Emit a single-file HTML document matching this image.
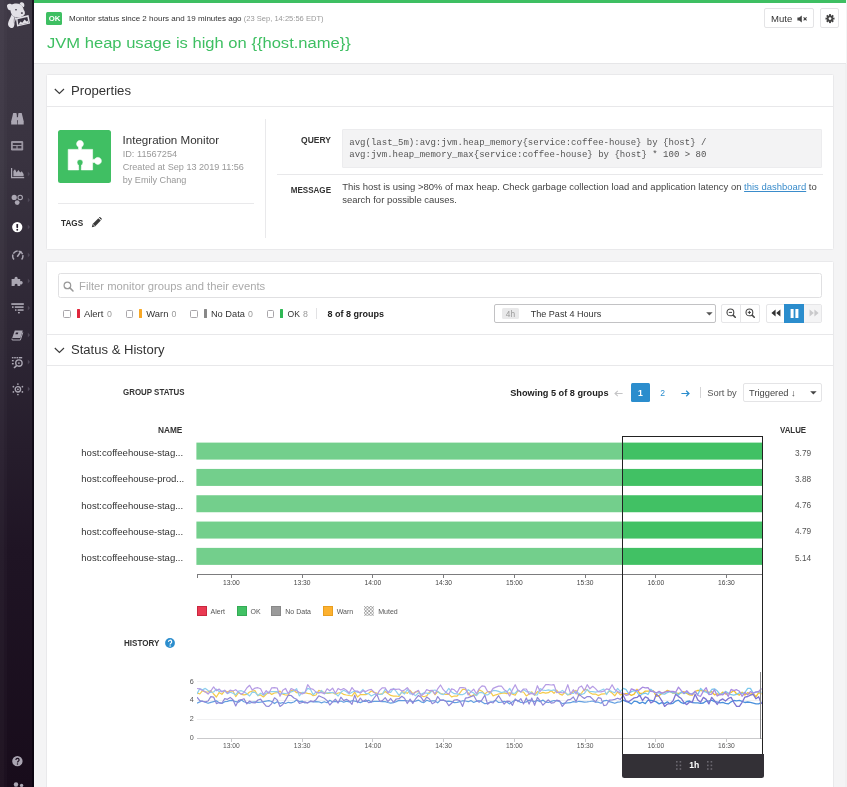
<!DOCTYPE html>
<html lang="en">
<head>
<meta charset="utf-8">
<title>JVM heap usage is high on {{host.name}}</title>
<style>
*{box-sizing:border-box;margin:0;padding:0}
html,body{width:847px;height:787px;overflow:hidden}
body{font-family:"Liberation Sans",sans-serif;color:#333;background:#f4f4f5;position:relative;font-size:10px}
.a{position:absolute;display:block}
.t{position:absolute;white-space:nowrap}
#app{position:absolute;left:0;top:0;width:847px;height:787px;will-change:transform}
.g{color:#999}
a{color:#3a8ccb}
</style>
</head>
<body>
<div id="app">
<div class="a" style="left:0px;top:0px;width:34px;height:787px;background:linear-gradient(180deg,#3e3845 0%,#393340 20%,#2c2533 45%,#1f1424 70%,#180c1b 100%)"></div>
<div class="a" style="left:0px;top:0px;width:4px;height:787px;background:rgba(255,255,255,0.04)"></div>
<div class="a" style="left:4px;top:0px;width:3px;height:787px;background:rgba(255,255,255,0.02)"></div>
<div class="a" style="left:32.4px;top:0px;width:1.6px;height:787px;background:rgba(4,0,10,0.6)"></div>
<svg class="a" style="left:0px;top:0px;" width="34" height="32" viewBox="0 0 34 32"><g fill="#e2e0e6"><path d="M7 6.2 C6.6 4.4 8.6 3.4 10.4 3.8 C12 4.2 12.6 5.6 12.4 7.4 C12.2 9.4 11 10.6 9.6 10.2 C8 9.8 7.3 8 7 6.2 Z"/><path d="M10.6 5.2 C13 3.4 17.6 3 20.4 4.4 C22.4 5.6 23.4 8 23.8 10 C24.6 11 25.2 12.6 24.8 14 C24.2 16 21.6 17.2 18.6 17.4 C15.6 17.6 12.8 16.6 11.6 14.2 C10.4 11.8 9.8 7.6 10.6 5.2 Z"/><path d="M19.6 3.4 C20.4 2 22.6 1.8 23.6 3 C24.6 4.2 24.6 6.2 23.8 7.2 C22.6 6.6 20.6 5 19.6 3.4 Z"/><path d="M11.6 14.6 C10.6 17.6 8.6 20.6 8.1 23.2 C7.7 25.6 9.4 27.8 11.8 28 C13.4 28.1 14.2 26.6 14.4 24.6 C14.6 22 15.6 19.8 16.6 17.8 C15 17.4 13 16.4 11.6 14.6 Z"/><path d="M15.9 17.9 L28.5 15 L30.1 23.6 L17.1 26.6 Z"/></g><path d="M17.5 19.2 L27.4 16.9 L28.5 22.7 L18.3 25.1 Z" fill="#3a3543"/><path d="M18.2 24.9 L20.6 21.4 L22.2 22.8 L24.6 19.4 L26.6 21.6 L27.6 20.4 L28.4 22.7 Z" fill="#e2e0e6"/><ellipse cx="16" cy="9.7" rx="0.9" ry="0.75" fill="#3a3543"/><ellipse cx="21.9" cy="13.1" rx="1.1" ry="0.8" fill="#3a3543"/><path d="M14.8 17 C14.2 19.2 14 21.4 14.4 23.6" stroke="#3a3543" stroke-width="0.5" fill="none"/></svg>
<svg class="a" style="left:10px;top:112px;" width="15" height="14" viewBox="0 0 15 14"><g fill="#aba7b3"><path d="M3.2 1 h3.2 l0.4 2 l0.4 9.6 h-6 v-3.4 z"/><path d="M8.5 1 h3.2 l2 8.2 v3.4 h-6 l0.4-9.6 z"/><rect x="6.2" y="5.2" width="2.6" height="3"/></g></svg>
<svg class="a" style="left:10px;top:140px;" width="15" height="12" viewBox="0 0 15 12"><rect x="1" y="0.9" width="12.2" height="9.5" rx="1.2" fill="#aba7b3" opacity="0.85"/><rect x="2.8" y="3" width="8.6" height="2" fill="#3a3441"/><rect x="2.8" y="6" width="3.6" height="2.4" fill="#3a3441"/><rect x="7.6" y="6" width="3.8" height="2.4" fill="#3a3441"/></svg>
<svg class="a" style="left:10px;top:167px;" width="16" height="12" viewBox="0 0 16 12"><path d="M1.6 1 v9.6 h12.6" fill="none" stroke="#aba7b3" stroke-width="1.2"/><path d="M3.4 9.2 V4 L5 2.2 L6.6 5.4 L8.4 3 L10.2 5.6 L11.8 4.2 L13.6 7 V9.2 Z" fill="#aba7b3"/></svg>
<svg class="a" style="left:11px;top:194px;" width="13" height="12" viewBox="0 0 13 12"><circle cx="3.2" cy="3.4" r="2.6" fill="#aba7b3"/><circle cx="9.2" cy="3.4" r="2.2" fill="none" stroke="#aba7b3" stroke-width="1.1"/><circle cx="6.2" cy="8.6" r="2.4" fill="#aba7b3"/></svg>
<svg class="a" style="left:11px;top:221px;" width="13" height="13" viewBox="0 0 13 13"><circle cx="6.25" cy="6.1" r="5.15" fill="#fff"/><rect x="5.4" y="3" width="1.7" height="3.9" rx="0.6" fill="#231a29"/><circle cx="6.25" cy="8.7" r="0.95" fill="#231a29"/></svg>
<svg class="a" style="left:11px;top:248px;" width="14" height="13" viewBox="0 0 14 13"><path d="M3 11.6 A5.1 5.1 0 1 1 10.6 11.6" fill="none" stroke="#aba7b3" stroke-width="1.5" stroke-dasharray="5.2 0.9"/><path d="M6.6 8.2 L9.8 3.6" stroke="#aba7b3" stroke-width="1.6" stroke-linecap="round"/></svg>
<svg class="a" style="left:11px;top:275px;" width="13" height="12" viewBox="0 0 13 12"><path d="M0.6 4 h3 a1.6 1.6 0 1 1 3 0 h2.6 v2.2 a1.7 1.7 0 1 1 0 3 v1.8 h-2.8 a1.5 1.5 0 1 0 -2.6 0 h-3.2 z" fill="#aba7b3"/></svg>
<svg class="a" style="left:11px;top:302px;" width="14" height="12" viewBox="0 0 14 12"><g fill="#aba7b3"><rect x="0.3" y="1.2" width="12.5" height="1.7"/><rect x="1" y="4.3" width="1.6" height="1.6"/><rect x="3.8" y="4.3" width="8.8" height="1.6"/><rect x="4" y="7.3" width="1.5" height="1.5"/><rect x="6.6" y="7.3" width="6" height="1.5"/><rect x="7" y="10" width="1.8" height="1.4"/></g></svg>
<svg class="a" style="left:11px;top:330px;" width="13" height="11" viewBox="0 0 13 11"><path d="M3.8 0.5 h8 l-2.4 7.6 h-8.2 z" fill="#aba7b3"/><path d="M1 8.6 l0.2 1.4 h8.2 l2.4-7.6" fill="none" stroke="#aba7b3" stroke-width="1"/><rect x="5.6" y="2.4" width="2.4" height="1.8" fill="#2a2231" transform="skewX(-16)"/></svg>
<svg class="a" style="left:11px;top:355.5px;" width="13" height="13" viewBox="0 0 13 13"><g fill="#aba7b3"><rect x="0.9" y="1" width="1.6" height="1.4"/><rect x="3.2" y="1" width="1.6" height="1.4"/><rect x="5.5" y="1" width="1.6" height="1.4"/><rect x="7.8" y="1" width="3.4" height="1.4"/><rect x="0.9" y="4" width="1.8" height="1.4"/><rect x="0.9" y="7" width="1.8" height="1.4"/></g><circle cx="7.9" cy="7.1" r="3.2" fill="none" stroke="#aba7b3" stroke-width="1.4"/><circle cx="7.9" cy="7.1" r="0.9" fill="#aba7b3"/><path d="M5.6 9.6 L3 12" stroke="#aba7b3" stroke-width="1.6"/></svg>
<svg class="a" style="left:11px;top:383px;" width="14" height="13" viewBox="0 0 14 13"><circle cx="6.9" cy="6.3" r="2.7" fill="none" stroke="#aba7b3" stroke-width="1.3"/><circle cx="6.9" cy="6.3" r="0.9" fill="#aba7b3"/><g fill="#aba7b3"><circle cx="6.90" cy="1.10" r="0.85"/><circle cx="11.40" cy="3.70" r="0.85"/><circle cx="11.40" cy="8.90" r="0.85"/><circle cx="6.90" cy="11.50" r="0.85"/><circle cx="2.40" cy="8.90" r="0.85"/><circle cx="2.40" cy="3.70" r="0.85"/></g></svg>
<svg class="a" style="left:27px;top:170.5px;" width="4" height="6" viewBox="0 0 4 6"><path d="M0.8 0.6 L3 3 L0.8 5.4 Z" fill="#4f4958"/></svg>
<svg class="a" style="left:27px;top:197px;" width="4" height="6" viewBox="0 0 4 6"><path d="M0.8 0.6 L3 3 L0.8 5.4 Z" fill="#4f4958"/></svg>
<svg class="a" style="left:27px;top:224.4px;" width="4" height="6" viewBox="0 0 4 6"><path d="M0.8 0.6 L3 3 L0.8 5.4 Z" fill="#4f4958"/></svg>
<svg class="a" style="left:27px;top:251.6px;" width="4" height="6" viewBox="0 0 4 6"><path d="M0.8 0.6 L3 3 L0.8 5.4 Z" fill="#4f4958"/></svg>
<svg class="a" style="left:27px;top:278px;" width="4" height="6" viewBox="0 0 4 6"><path d="M0.8 0.6 L3 3 L0.8 5.4 Z" fill="#4f4958"/></svg>
<svg class="a" style="left:27px;top:305px;" width="4" height="6" viewBox="0 0 4 6"><path d="M0.8 0.6 L3 3 L0.8 5.4 Z" fill="#4f4958"/></svg>
<svg class="a" style="left:27px;top:332.4px;" width="4" height="6" viewBox="0 0 4 6"><path d="M0.8 0.6 L3 3 L0.8 5.4 Z" fill="#4f4958"/></svg>
<svg class="a" style="left:27px;top:359px;" width="4" height="6" viewBox="0 0 4 6"><path d="M0.8 0.6 L3 3 L0.8 5.4 Z" fill="#4f4958"/></svg>
<svg class="a" style="left:27px;top:386px;" width="4" height="6" viewBox="0 0 4 6"><path d="M0.8 0.6 L3 3 L0.8 5.4 Z" fill="#4f4958"/></svg>
<svg class="a" style="left:11px;top:755px;" width="13" height="13" viewBox="0 0 13 13"><circle cx="6.4" cy="6.1" r="5.2" fill="#a9a4b1"/><path d="M4.9 5 a1.6 1.6 0 1 1 2.4 1.3 c-.6.4-.8.7-.8 1.3" fill="none" stroke="#1c1020" stroke-width="1.2"/><circle cx="6.5" cy="9.1" r="0.75" fill="#1c1020"/></svg>
<svg class="a" style="left:12px;top:781px;" width="13" height="8" viewBox="0 0 13 8"><circle cx="4" cy="3.4" r="2.2" fill="#aba7b3"/><path d="M0.6 9 a3.4 3.4 0 0 1 6.8 0 z" fill="#aba7b3"/><circle cx="9.6" cy="4.4" r="1.7" fill="#aba7b3"/></svg>
<div class="a" style="left:34px;top:0px;width:811.5px;height:2.8px;background:#3ebf62"></div>
<div class="a" style="left:34px;top:2.8px;width:811.5px;height:61.2px;background:#fff;border-bottom:1px solid #e6e6e8"></div>
<div class="a" style="left:46px;top:12px;width:16px;height:13px;background:#3ebf62;border-radius:1.5px"></div>
<div class="t" style="top:14px;font-size:7.8px;line-height:9px;color:#fff;font-weight:bold;left:-45.40px;width:200px;text-align:center;">OK</div>
<div class="t" style="top:14px;font-size:8px;line-height:9px;color:#333;left:69.00px;">Monitor status since 2 hours and 19 minutes ago</div>
<div class="t" style="top:14px;font-size:7.57px;line-height:9px;color:#999;left:243.70px;">(23 Sep, 14:25:56 EDT)</div>
<div class="t" style="top:34px;font-size:15.4px;line-height:17px;color:#3ebf62;transform:scaleX(1.076);transform-origin:0 50%;left:46.60px;">JVM heap usage is high on {{host.name}}</div>
<div class="a" style="left:764px;top:8.3px;width:50.3px;height:19.7px;background:#fff;border:1px solid #e4e4e6;border-radius:2px"></div>
<div class="t" style="top:13px;font-size:9.54px;line-height:11px;color:#333;left:771.00px;">Mute</div>
<svg class="a" style="left:797px;top:14.5px;" width="11" height="8" viewBox="0 0 11 8"><path d="M0.4 2.6 h1.8 l2.6-2.2 v7.2 l-2.6-2.2 h-1.8 z" fill="#444"/><path d="M6.6 2.4 l3 3 M9.6 2.4 l-3 3" stroke="#444" stroke-width="1.1"/></svg>
<div class="a" style="left:820.4px;top:8.3px;width:18.9px;height:19.7px;background:#fff;border:1px solid #e4e4e6;border-radius:2px"></div>
<svg class="a" style="left:825px;top:14px;" width="10" height="10" viewBox="0 0 10 10"><g transform="translate(5 4.6)"><g fill="#444"><rect x="-0.95" y="-4.5" width="1.9" height="9" transform="rotate(0)"/><rect x="-0.95" y="-4.5" width="1.9" height="9" transform="rotate(45)"/><rect x="-0.95" y="-4.5" width="1.9" height="9" transform="rotate(90)"/><rect x="-0.95" y="-4.5" width="1.9" height="9" transform="rotate(135)"/></g><circle r="3.1" fill="#444"/><circle r="1.35" fill="#fff"/></g></svg>
<div class="a" style="left:46px;top:74px;width:788px;height:176px;background:#fff;border:1px solid #e9e9eb;border-radius:1.5px"></div>
<div class="a" style="left:47px;top:106px;width:786px;height:1px;background:#e8e8ea"></div>
<svg class="a" style="left:54px;top:88px;" width="11" height="7" viewBox="0 0 11 7"><path d="M0.8 1 L5.4 5.4 L10 1" fill="none" stroke="#3a3a3a" stroke-width="1.15"/></svg>
<div class="t" style="top:84px;font-size:12.3px;line-height:14px;color:#333;transform:scaleX(1.07);transform-origin:0 50%;left:70.90px;">Properties</div>
<div class="a" style="left:57.9px;top:129.6px;width:53.4px;height:53.8px;background:#40bf63;border-radius:2.5px"></div>
<svg class="a" style="left:58px;top:129px;" width="54" height="56" viewBox="0 0 54 56"><path d="M10.2 20.4 H20.5 L20.6 18 A3.4 3.4 0 1 1 23.4 18 L23.5 20.4 H34.6 V30.4 L36.8 30.2 A3.5 3.5 0 1 1 36.8 33.6 L34.6 33.4 V40.9 H23.3 L23.5 36.1 A3 3 0 1 0 20.5 36.1 L20.7 40.9 H10.2 Z" fill="#fff" stroke="#fff" stroke-width="0.6" stroke-linejoin="round"/></svg>
<div class="t" style="top:133px;font-size:11.6px;line-height:13px;color:#333;left:122.50px;">Integration Monitor</div>
<div class="t" style="top:149px;font-size:9.19px;line-height:10px;color:#999;left:122.70px;">ID: 11567254</div>
<div class="t" style="top:162px;font-size:9.1px;line-height:10px;color:#999;left:122.70px;">Created at Sep 13 2019 11:56</div>
<div class="t" style="top:175px;font-size:9.1px;line-height:10px;color:#999;left:122.70px;">by Emily Chang</div>
<div class="a" style="left:58.4px;top:203.4px;width:195.6px;height:1px;background:#e9e9eb"></div>
<div class="t" style="top:217px;font-size:9.4px;line-height:11px;color:#2e2e2e;font-weight:bold;transform:scaleX(0.875);transform-origin:0 50%;left:60.90px;">TAGS</div>
<svg class="a" style="left:91px;top:216.6px;" width="11" height="11" viewBox="0 0 11 11"><path d="M0.8 10.2 L1.6 7 L7.4 1.2 L9.8 3.6 L4 9.4 Z" fill="#3a3a3a"/><path d="M8 0.6 L8.8 -0.2 L11 2 L10.2 2.8 Z" fill="#222"/><path d="M1.6 7 L4 9.4" stroke="#fff" stroke-width="0.7"/></svg>
<div class="a" style="left:265px;top:119px;width:1px;height:119px;background:#e9e9eb"></div>
<div class="t" style="top:135px;font-size:9.1px;line-height:10px;color:#333;font-weight:bold;transform:scaleX(0.935);transform-origin:100% 50%;right:516.30px;">QUERY</div>
<div class="a" style="left:342.2px;top:129.4px;width:480.3px;height:38.6px;background:#f3f3f4;border:1px solid #ececee;border-radius:1px"></div>
<div class="t" style="top:137px;font-size:9.03px;line-height:11px;color:#555;font-family:&quot;Liberation Mono&quot;,monospace;left:349.30px;">avg(last_5m):avg:jvm.heap_memory{service:coffee-house} by {host} /</div>
<div class="t" style="top:149px;font-size:9.03px;line-height:11px;color:#555;font-family:&quot;Liberation Mono&quot;,monospace;left:349.30px;">avg:jvm.heap_memory_max{service:coffee-house} by {host} * 100 &gt; 80</div>
<div class="a" style="left:277px;top:173.7px;width:545.5px;height:1px;background:#e8e8ea"></div>
<div class="t" style="top:185px;font-size:9.0px;line-height:10px;color:#333;font-weight:bold;transform:scaleX(0.895);transform-origin:100% 50%;right:516.30px;">MESSAGE</div>
<div class="t" style="top:181px;font-size:9.48px;line-height:11px;color:#444;left:342.20px;">This host is using &gt;80% of max heap. Check garbage collection load and application latency on <a href="#" style="color:#3a8ccb;text-decoration:underline">this dashboard</a> to</div>
<div class="t" style="top:194px;font-size:9.48px;line-height:11px;color:#444;left:342.20px;">search for possible causes.</div>
<div class="a" style="left:46px;top:261px;width:788px;height:540px;background:#fff;border:1px solid #e9e9eb;border-radius:1.5px"></div>
<div class="a" style="left:57.6px;top:273px;width:764.8px;height:25px;background:#fff;border:1px solid #e0e0e2;border-radius:2.5px"></div>
<svg class="a" style="left:63px;top:281px;" width="12" height="12" viewBox="0 0 12 12"><circle cx="4.4" cy="4.4" r="3.3" fill="none" stroke="#999" stroke-width="1.2"/><path d="M6.9 6.9 L10 10" stroke="#999" stroke-width="1.5" stroke-linecap="round"/></svg>
<div class="t" style="top:280px;font-size:11.24px;line-height:12px;color:#aaa;left:79.10px;">Filter monitor groups and their events</div>
<div class="a" style="left:63.2px;top:310.3px;width:7.6px;height:7.6px;background:#fff;border:1px solid #a9a6aa;border-radius:1.5px"></div>
<div class="a" style="left:77.1px;top:308.8px;width:3px;height:9.2px;background:#e0263c;border-radius:0.5px"></div>
<div class="t" style="top:308px;font-size:9.5px;line-height:11px;color:#333;left:83.90px;">Alert</div>
<div class="t" style="top:309px;font-size:8.8px;line-height:10px;color:#999;left:107.00px;">0</div>
<div class="a" style="left:125.6px;top:310.3px;width:7.6px;height:7.6px;background:#fff;border:1px solid #a9a6aa;border-radius:1.5px"></div>
<div class="a" style="left:138.9px;top:308.8px;width:3px;height:9.2px;background:#f9a825;border-radius:0.5px"></div>
<div class="t" style="top:308px;font-size:9.4px;line-height:11px;color:#333;left:146.30px;">Warn</div>
<div class="t" style="top:309px;font-size:8.8px;line-height:10px;color:#999;left:171.60px;">0</div>
<div class="a" style="left:190.2px;top:310.3px;width:7.6px;height:7.6px;background:#fff;border:1px solid #a9a6aa;border-radius:1.5px"></div>
<div class="a" style="left:204.1px;top:308.8px;width:3px;height:9.2px;background:#888;border-radius:0.5px"></div>
<div class="t" style="top:309px;font-size:9.27px;line-height:10px;color:#333;left:210.90px;">No Data</div>
<div class="t" style="top:309px;font-size:8.8px;line-height:10px;color:#999;left:248.10px;">0</div>
<div class="a" style="left:266.6px;top:310.3px;width:7.6px;height:7.6px;background:#fff;border:1px solid #a9a6aa;border-radius:1.5px"></div>
<div class="a" style="left:279.9px;top:308.8px;width:3px;height:9.2px;background:#2fb855;border-radius:0.5px"></div>
<div class="t" style="top:309px;font-size:8.6px;line-height:10px;color:#333;left:287.50px;">OK</div>
<div class="t" style="top:309px;font-size:8.8px;line-height:10px;color:#999;left:302.90px;">8</div>
<div class="a" style="left:315.5px;top:307.8px;width:1px;height:11.4px;background:#e2e2e4"></div>
<div class="t" style="top:309px;font-size:9.03px;line-height:10px;color:#222;font-weight:bold;left:327.40px;">8 of 8 groups</div>
<div class="a" style="left:494.3px;top:303.8px;width:221.8px;height:19px;background:#fff;border:1px solid #c2c2c4;border-radius:2px"></div>
<div class="a" style="left:501.7px;top:308.3px;width:17.4px;height:10.6px;background:#e9e9ea;border-radius:1.5px"></div>
<div class="t" style="top:309px;font-size:8.3px;line-height:10px;color:#999;left:410.40px;width:200px;text-align:center;">4h</div>
<div class="t" style="top:309px;font-size:9.07px;line-height:10px;color:#333;left:530.70px;">The Past 4 Hours</div>
<svg class="a" style="left:706px;top:311.6px;" width="7" height="4" viewBox="0 0 7 4"><path d="M0.2 0.2 H6.6 L3.4 3.6 Z" fill="#555"/></svg>
<div class="a" style="left:721.3px;top:303.8px;width:38.4px;height:19px;background:#fff;border:1px solid #e6e6e8;border-radius:2px"></div>
<div class="a" style="left:740px;top:304.8px;width:1px;height:17px;background:#e6e6e8"></div>
<svg class="a" style="left:725.5px;top:308px;" width="10" height="10" viewBox="0 0 10 10"><circle cx="4.4" cy="4.4" r="3.4" fill="none" stroke="#444" stroke-width="1.1"/><path d="M6.9 6.9 L9.8 9.8" stroke="#444" stroke-width="1.5"/><path d="M2.8 4.4 H6" stroke="#444" stroke-width="1"/></svg>
<svg class="a" style="left:745px;top:308px;" width="10" height="10" viewBox="0 0 10 10"><circle cx="4.4" cy="4.4" r="3.4" fill="none" stroke="#444" stroke-width="1.1"/><path d="M6.9 6.9 L9.8 9.8" stroke="#444" stroke-width="1.5"/><path d="M2.8 4.4 H6 M4.4 2.8 V6" stroke="#444" stroke-width="1"/></svg>
<div class="a" style="left:766px;top:303.8px;width:56.4px;height:19px;background:#fff;border:1px solid #e6e6e8;border-radius:2px"></div>
<div class="a" style="left:804px;top:304.8px;width:17.4px;height:17px;background:#f4f4f5"></div>
<div class="a" style="left:784.2px;top:303.8px;width:19.9px;height:19px;background:#2b8dcd"></div>
<svg class="a" style="left:770.5px;top:309.3px;" width="10" height="8" viewBox="0 0 10 8"><path d="M4.6 0.4 V7.6 L0.4 4 Z M9.4 0.4 V7.6 L5.2 4 Z" fill="#333"/></svg>
<svg class="a" style="left:789.6px;top:308.8px;" width="10" height="9" viewBox="0 0 10 9"><rect x="0.6" y="0" width="3" height="9" fill="#fff"/><rect x="5.4" y="0" width="3" height="9" fill="#fff"/></svg>
<svg class="a" style="left:808.5px;top:309.3px;" width="10" height="8" viewBox="0 0 10 8"><path d="M0.6 0.4 V7.6 L4.8 4 Z M5.4 0.4 V7.6 L9.6 4 Z" fill="#c9c9cb"/></svg>
<div class="a" style="left:47px;top:333.6px;width:786px;height:1px;background:#e8e8ea"></div>
<svg class="a" style="left:54px;top:346.7px;" width="11" height="7" viewBox="0 0 11 7"><path d="M0.8 1 L5.4 5.4 L10 1" fill="none" stroke="#3a3a3a" stroke-width="1.15"/></svg>
<div class="t" style="top:343px;font-size:12.3px;line-height:14px;color:#333;transform:scaleX(1.062);transform-origin:0 50%;left:70.90px;">Status &amp; History</div>
<div class="a" style="left:47px;top:365.2px;width:786px;height:1px;background:#e8e8ea"></div>
<div class="t" style="top:387px;font-size:8.3px;line-height:10px;color:#333;font-weight:bold;transform:scaleX(0.955);transform-origin:0 50%;left:123.10px;">GROUP STATUS</div>
<div class="t" style="top:388px;font-size:9.18px;line-height:10px;color:#222;font-weight:bold;left:510.20px;">Showing 5 of 8 groups</div>
<svg class="a" style="left:613.5px;top:389.5px;" width="9" height="7" viewBox="0 0 9 7"><path d="M8.6 3.5 H1.2 M3.8 0.8 L1 3.5 L3.8 6.2" fill="none" stroke="#c4c4c6" stroke-width="1.1"/></svg>
<div class="a" style="left:631.1px;top:383.2px;width:18.8px;height:18.4px;background:#2b8dcd;border-radius:1.5px"></div>
<div class="t" style="top:388px;font-size:8.6px;line-height:10px;color:#fff;font-weight:bold;left:540.50px;width:200px;text-align:center;">1</div>
<div class="t" style="top:388px;font-size:8.6px;line-height:10px;color:#2b8dcd;left:562.60px;width:200px;text-align:center;">2</div>
<svg class="a" style="left:680.8px;top:389.5px;" width="9" height="7" viewBox="0 0 9 7"><path d="M0.4 3.5 H7.8 M5.2 0.8 L8 3.5 L5.2 6.2" fill="none" stroke="#2b8dcd" stroke-width="1.2"/></svg>
<div class="a" style="left:700.3px;top:387.3px;width:1px;height:11.2px;background:#d4d4d6"></div>
<div class="t" style="top:388px;font-size:9.3px;line-height:10px;color:#555;left:707.30px;">Sort by</div>
<div class="a" style="left:742.9px;top:383.2px;width:79.5px;height:18.4px;background:#fff;border:1px solid #e4e4e6;border-radius:2px"></div>
<div class="t" style="top:388px;font-size:9.3px;line-height:10px;color:#444;left:749.10px;">Triggered &#8595;</div>
<svg class="a" style="left:810px;top:390.6px;" width="7" height="4" viewBox="0 0 7 4"><path d="M0.2 0.2 H6.6 L3.4 3.6 Z" fill="#444"/></svg>
<div class="t" style="top:425px;font-size:8.3px;line-height:10px;color:#333;font-weight:bold;right:664.60px;">NAME</div>
<div class="t" style="top:425px;font-size:8.3px;line-height:10px;color:#333;font-weight:bold;transform:scaleX(0.95);transform-origin:0 50%;left:779.80px;">VALUE</div>
<div class="t" style="top:447px;font-size:9.57px;line-height:11px;color:#333;left:81.30px;">host:coffeehouse-stag...</div>
<div class="t" style="top:448px;font-size:8.8px;line-height:10px;color:#555;transform:scaleX(0.945);transform-origin:0 50%;left:795.00px;">3.79</div>
<div class="t" style="top:473px;font-size:9.57px;line-height:11px;color:#333;left:81.30px;">host:coffeehouse-prod...</div>
<div class="t" style="top:474px;font-size:8.8px;line-height:10px;color:#555;transform:scaleX(0.945);transform-origin:0 50%;left:795.00px;">3.88</div>
<div class="t" style="top:500px;font-size:9.57px;line-height:11px;color:#333;left:81.30px;">host:coffeehouse-stag...</div>
<div class="t" style="top:500px;font-size:8.8px;line-height:10px;color:#555;transform:scaleX(0.945);transform-origin:0 50%;left:795.00px;">4.76</div>
<div class="t" style="top:526px;font-size:9.57px;line-height:11px;color:#333;left:81.30px;">host:coffeehouse-stag...</div>
<div class="t" style="top:526px;font-size:8.8px;line-height:10px;color:#555;transform:scaleX(0.945);transform-origin:0 50%;left:795.00px;">4.79</div>
<div class="t" style="top:552px;font-size:9.57px;line-height:11px;color:#333;left:81.30px;">host:coffeehouse-stag...</div>
<div class="t" style="top:553px;font-size:8.8px;line-height:10px;color:#555;transform:scaleX(0.945);transform-origin:0 50%;left:795.00px;">5.14</div>
<svg class="a" style="left:0;top:430px" width="847" height="150" viewBox="0 430 847 150"><rect x="196.4" y="442.60" width="426.1" height="17" fill="#73cf8c"/><rect x="622.5" y="442.60" width="139.6" height="17" fill="#41c164"/><rect x="196.4" y="468.92" width="426.1" height="17" fill="#73cf8c"/><rect x="622.5" y="468.92" width="139.6" height="17" fill="#41c164"/><rect x="196.4" y="495.24" width="426.1" height="17" fill="#73cf8c"/><rect x="622.5" y="495.24" width="139.6" height="17" fill="#41c164"/><rect x="196.4" y="521.56" width="426.1" height="17" fill="#73cf8c"/><rect x="622.5" y="521.56" width="139.6" height="17" fill="#41c164"/><rect x="196.4" y="547.88" width="426.1" height="17" fill="#73cf8c"/><rect x="622.5" y="547.88" width="139.6" height="17" fill="#41c164"/></svg>
<div class="a" style="left:196.7px;top:574.4px;width:566px;height:1px;background:#7c7c7e"></div>
<div class="a" style="left:196.7px;top:574.4px;width:1px;height:4px;background:#7c7c7e"></div>
<div class="a" style="left:230.8px;top:574.4px;width:1px;height:3.4px;background:#7c7c7e"></div>
<div class="t" style="top:579px;font-size:6.7px;line-height:7px;color:#444;left:131.30px;width:200px;text-align:center;">13:00</div>
<div class="a" style="left:301.6px;top:574.4px;width:1px;height:3.4px;background:#7c7c7e"></div>
<div class="t" style="top:579px;font-size:6.7px;line-height:7px;color:#444;left:202.10px;width:200px;text-align:center;">13:30</div>
<div class="a" style="left:372.4px;top:574.4px;width:1px;height:3.4px;background:#7c7c7e"></div>
<div class="t" style="top:579px;font-size:6.7px;line-height:7px;color:#444;left:272.90px;width:200px;text-align:center;">14:00</div>
<div class="a" style="left:443.2px;top:574.4px;width:1px;height:3.4px;background:#7c7c7e"></div>
<div class="t" style="top:579px;font-size:6.7px;line-height:7px;color:#444;left:343.70px;width:200px;text-align:center;">14:30</div>
<div class="a" style="left:513.9px;top:574.4px;width:1px;height:3.4px;background:#7c7c7e"></div>
<div class="t" style="top:579px;font-size:6.7px;line-height:7px;color:#444;left:414.40px;width:200px;text-align:center;">15:00</div>
<div class="a" style="left:584.6px;top:574.4px;width:1px;height:3.4px;background:#7c7c7e"></div>
<div class="t" style="top:579px;font-size:6.7px;line-height:7px;color:#444;left:485.10px;width:200px;text-align:center;">15:30</div>
<div class="a" style="left:655.4px;top:574.4px;width:1px;height:3.4px;background:#7c7c7e"></div>
<div class="t" style="top:579px;font-size:6.7px;line-height:7px;color:#444;left:555.90px;width:200px;text-align:center;">16:00</div>
<div class="a" style="left:725.9px;top:574.4px;width:1px;height:3.4px;background:#7c7c7e"></div>
<div class="t" style="top:579px;font-size:6.7px;line-height:7px;color:#444;left:626.40px;width:200px;text-align:center;">16:30</div>
<div class="a" style="left:196.8px;top:606.3px;width:10.1px;height:10px;background:#ea3a52;border:1px solid #c8283f"></div>
<div class="t" style="top:608px;font-size:7.0px;line-height:7px;color:#555;left:210.60px;">Alert</div>
<div class="a" style="left:236.8px;top:606.3px;width:10.1px;height:10px;background:#41c164;border:1px solid #35aa55"></div>
<div class="t" style="top:608px;font-size:7.0px;line-height:7px;color:#555;left:250.60px;">OK</div>
<div class="a" style="left:270.8px;top:606.3px;width:10.1px;height:10px;background:#9a9a9a;border:1px solid #888"></div>
<div class="t" style="top:608px;font-size:7.0px;line-height:7px;color:#555;left:285.30px;">No Data</div>
<div class="a" style="left:322.5px;top:606.3px;width:10.1px;height:10px;background:#fdb12f;border:1px solid #e89e20"></div>
<div class="t" style="top:608px;font-size:7.0px;line-height:7px;color:#555;left:336.70px;">Warn</div>
<svg class="a" style="left:363.6px;top:606.3px;" width="10.2" height="10" viewBox="0 0 10.2 10"><defs><pattern id="hx" width="3.4" height="3.4" patternUnits="userSpaceOnUse"><path d="M0 0 L3.4 3.4 M3.4 0 L0 3.4" stroke="#8a8a8a" stroke-width="0.7"/></pattern></defs><rect width="10.2" height="10" fill="url(#hx)"/></svg>
<div class="t" style="top:608px;font-size:7.05px;line-height:7px;color:#555;left:378.20px;">Muted</div>
<div class="t" style="top:638px;font-size:8.5px;line-height:10px;color:#333;font-weight:bold;transform:scaleX(0.95);transform-origin:0 50%;left:124.20px;">HISTORY</div>
<svg class="a" style="left:164.8px;top:637.8px;" width="10" height="10" viewBox="0 0 10 10"><circle cx="5" cy="5" r="4.9" fill="#2b8dcd"/><path d="M3.5 3.9 a1.6 1.6 0 1 1 2.4 1.3 c-.6.4-.8.7-.8 1.3" fill="none" stroke="#fff" stroke-width="1.2"/><circle cx="5.1" cy="8" r="0.7" fill="#fff"/></svg>
<div class="a" style="left:197px;top:718.7px;width:566px;height:1px;background:#f1f1f2"></div>
<div class="a" style="left:197px;top:699.9px;width:566px;height:1px;background:#f1f1f2"></div>
<div class="a" style="left:197px;top:681.1px;width:566px;height:1px;background:#f1f1f2"></div>
<div class="a" style="left:197px;top:738.0px;width:566px;height:1px;background:#c9c9cb"></div>
<div class="t" style="top:733px;font-size:7.2px;line-height:9px;color:#555;right:653.20px;">0</div>
<div class="t" style="top:714px;font-size:7.2px;line-height:9px;color:#555;right:653.20px;">2</div>
<div class="t" style="top:695px;font-size:7.2px;line-height:9px;color:#555;right:653.20px;">4</div>
<div class="t" style="top:677px;font-size:7.2px;line-height:9px;color:#555;right:653.20px;">6</div>
<div class="a" style="left:230.8px;top:738.5px;width:1px;height:3px;background:#c9c9cb"></div>
<div class="t" style="top:742px;font-size:6.7px;line-height:7px;color:#555;left:131.30px;width:200px;text-align:center;">13:00</div>
<div class="a" style="left:301.6px;top:738.5px;width:1px;height:3px;background:#c9c9cb"></div>
<div class="t" style="top:742px;font-size:6.7px;line-height:7px;color:#555;left:202.10px;width:200px;text-align:center;">13:30</div>
<div class="a" style="left:372.4px;top:738.5px;width:1px;height:3px;background:#c9c9cb"></div>
<div class="t" style="top:742px;font-size:6.7px;line-height:7px;color:#555;left:272.90px;width:200px;text-align:center;">14:00</div>
<div class="a" style="left:443.2px;top:738.5px;width:1px;height:3px;background:#c9c9cb"></div>
<div class="t" style="top:742px;font-size:6.7px;line-height:7px;color:#555;left:343.70px;width:200px;text-align:center;">14:30</div>
<div class="a" style="left:513.9px;top:738.5px;width:1px;height:3px;background:#c9c9cb"></div>
<div class="t" style="top:742px;font-size:6.7px;line-height:7px;color:#555;left:414.40px;width:200px;text-align:center;">15:00</div>
<div class="a" style="left:584.6px;top:738.5px;width:1px;height:3px;background:#c9c9cb"></div>
<div class="t" style="top:742px;font-size:6.7px;line-height:7px;color:#555;left:485.10px;width:200px;text-align:center;">15:30</div>
<div class="a" style="left:655.4px;top:738.5px;width:1px;height:3px;background:#c9c9cb"></div>
<div class="t" style="top:742px;font-size:6.7px;line-height:7px;color:#555;left:555.90px;width:200px;text-align:center;">16:00</div>
<div class="a" style="left:725.9px;top:738.5px;width:1px;height:3px;background:#c9c9cb"></div>
<div class="t" style="top:742px;font-size:6.7px;line-height:7px;color:#555;left:626.40px;width:200px;text-align:center;">16:30</div>
<svg class="a" style="left:0;top:0" width="847" height="787" viewBox="0 0 847 787"><defs><clipPath id="cl"><rect x="197" y="660" width="425.5" height="90"/></clipPath><clipPath id="cr"><rect x="622.5" y="660" width="141" height="90"/></clipPath></defs><g clip-path="url(#cl)" opacity="0.86" fill="none" stroke-width="1.2" stroke-linejoin="round"><polyline stroke="#4a90dc" points="197.0,703.1 199.8,701.9 202.5,701.0 205.3,702.2 208.1,703.3 210.8,702.4 213.6,701.6 216.4,700.8 219.1,702.8 221.9,703.4 224.7,701.7 227.4,701.4 230.2,700.4 233.0,700.6 235.7,701.7 238.5,702.2 241.3,700.1 244.0,701.8 246.8,702.7 249.6,703.2 252.3,702.2 255.1,701.9 257.9,702.3 260.6,702.1 263.4,701.7 266.2,701.2 268.9,700.7 271.7,701.5 274.5,703.6 277.2,701.7 280.0,703.3 282.8,702.5 285.5,703.5 288.3,702.3 291.1,702.8 293.9,702.0 296.6,700.1 299.4,701.5 302.2,701.1 304.9,703.0 307.7,702.5 310.5,701.5 313.2,701.9 316.0,701.6 318.8,701.8 321.5,702.9 324.3,701.7 327.1,702.7 329.8,700.3 332.6,702.0 335.4,701.3 338.1,701.8 340.9,701.0 343.7,702.3 346.4,701.1 349.2,701.9 352.0,700.7 354.7,701.1 357.5,701.6 360.3,702.6 363.0,701.4 365.8,701.4 368.6,700.2 371.3,701.9 374.1,701.4 376.9,701.3 379.6,701.5 382.4,701.7 385.2,701.7 387.9,702.5 390.7,703.1 393.5,702.6 396.2,701.6 399.0,700.4 401.8,700.6 404.5,700.6 407.3,700.9 410.1,701.0 412.8,701.6 415.6,701.1 418.4,700.1 421.1,701.8 423.9,702.6 426.7,700.2 429.4,701.3 432.2,700.9 435.0,700.9 437.7,702.8 440.5,700.1 443.3,700.1 446.0,701.3 448.8,701.1 451.6,701.6 454.3,702.7 457.1,702.3 459.9,701.7 462.6,700.8 465.4,701.0 468.2,701.7 470.9,700.6 473.7,702.4 476.5,701.3 479.2,700.7 482.0,701.9 484.8,703.7 487.6,703.3 490.3,702.1 493.1,701.5 495.9,700.4 498.6,702.5 501.4,702.1 504.2,701.4 506.9,702.0 509.7,703.9 512.5,701.7 515.2,700.1 518.0,700.5 520.8,702.5 523.5,702.5 526.3,701.9 529.1,700.1 531.8,700.9 534.6,701.6 537.4,700.4 540.1,701.6 542.9,700.1 545.7,702.2 548.4,702.5 551.2,701.4 554.0,700.5 556.7,701.0 559.5,701.4 562.3,703.6 565.0,703.1 567.8,702.8 570.6,702.7 573.3,701.6 576.1,702.2 578.9,701.3 581.6,701.7 584.4,702.2 587.2,701.9 589.9,701.5 592.7,701.0 595.5,702.2 598.2,702.2 601.0,703.3 603.8,700.8 606.5,700.3 609.3,701.7 612.1,702.4 614.8,703.3 617.6,702.1 620.4,701.8 623.1,700.1 625.9,701.3 628.7,702.5 631.4,703.9 634.2,701.1 637.0,701.6 639.7,703.4 642.5,702.2 645.3,703.6 648.0,700.1 650.8,700.4 653.6,701.0 656.3,701.9 659.1,703.9 661.9,702.6 664.6,703.6 667.4,701.8 670.2,703.9 673.0,703.3 675.7,701.1 678.5,700.2 681.3,702.7 684.0,703.6 686.8,701.5 689.6,701.0 692.3,702.7 695.1,702.8 697.9,702.8 700.6,703.3 703.4,703.0 706.2,701.0 708.9,701.1 711.7,700.1 714.5,701.6 717.2,702.0 720.0,702.9 722.8,702.3 725.5,703.3 728.3,703.9 731.1,701.8 733.8,700.5 736.6,700.8 739.4,700.4 742.1,701.3 744.9,702.5 747.7,702.0 750.4,702.3 753.2,703.1 756.0,703.9 758.7,703.9 761.5,702.4"/><polyline stroke="#f3c22e" points="197.0,692.8 199.8,694.0 202.5,690.6 205.3,692.2 208.1,691.8 210.8,690.5 213.6,694.0 216.4,697.0 219.1,692.6 221.9,694.3 224.7,690.9 227.4,691.9 230.2,690.9 233.0,691.1 235.7,696.6 238.5,692.6 241.3,694.3 244.0,694.9 246.8,694.4 249.6,692.0 252.3,691.1 255.1,690.7 257.9,695.7 260.6,694.9 263.4,697.0 266.2,694.3 268.9,692.3 271.7,694.4 274.5,693.0 277.2,692.6 280.0,691.1 282.8,694.2 285.5,695.0 288.3,695.1 291.1,690.3 293.9,690.3 296.6,692.7 299.4,692.6 302.2,692.8 304.9,692.7 307.7,693.4 310.5,693.8 313.2,695.7 316.0,695.0 318.8,690.4 321.5,691.4 324.3,692.6 327.1,693.4 329.8,693.1 332.6,692.4 335.4,694.2 338.1,693.0 340.9,692.6 343.7,694.4 346.4,695.0 349.2,695.5 352.0,695.8 354.7,692.1 357.5,697.0 360.3,694.6 363.0,694.7 365.8,694.7 368.6,693.3 371.3,691.0 374.1,692.5 376.9,693.2 379.6,694.3 382.4,693.7 385.2,691.5 387.9,693.5 390.7,695.4 393.5,696.1 396.2,696.0 399.0,696.5 401.8,691.9 404.5,692.1 407.3,693.3 410.1,690.4 412.8,693.7 415.6,691.8 418.4,691.3 421.1,695.6 423.9,696.7 426.7,695.8 429.4,692.1 432.2,690.4 435.0,694.8 437.7,691.5 440.5,693.5 443.3,694.0 446.0,694.4 448.8,694.1 451.6,696.9 454.3,696.0 457.1,696.2 459.9,693.0 462.6,689.3 465.4,689.3 468.2,692.8 470.9,696.4 473.7,694.7 476.5,695.3 479.2,689.9 482.0,691.2 484.8,694.1 487.6,691.6 490.3,691.7 493.1,695.9 495.9,694.8 498.6,694.0 501.4,693.3 504.2,692.9 506.9,693.7 509.7,692.9 512.5,694.2 515.2,695.1 518.0,690.7 520.8,691.8 523.5,692.0 526.3,695.9 529.1,694.1 531.8,691.8 534.6,695.3 537.4,691.6 540.1,693.5 542.9,692.4 545.7,693.2 548.4,692.7 551.2,690.7 554.0,693.3 556.7,690.2 559.5,693.9 562.3,695.1 565.0,692.3 567.8,695.0 570.6,694.3 573.3,691.7 576.1,690.4 578.9,695.9 581.6,692.8 584.4,689.4 587.2,689.9 589.9,692.8 592.7,694.2 595.5,694.0 598.2,695.6 601.0,694.2 603.8,693.8 606.5,693.6 609.3,691.0 612.1,693.0 614.8,695.9 617.6,691.8 620.4,694.9 623.1,694.4 625.9,693.7 628.7,693.9 631.4,695.3 634.2,694.1 637.0,689.3 639.7,693.3 642.5,693.4 645.3,691.1 648.0,691.2 650.8,691.2 653.6,691.0 656.3,696.4 659.1,695.6 661.9,693.5 664.6,692.3 667.4,690.4 670.2,691.6 673.0,693.2 675.7,693.1 678.5,693.5 681.3,692.8 684.0,691.7 686.8,693.4 689.6,694.8 692.3,695.2 695.1,691.5 697.9,690.3 700.6,690.5 703.4,690.8 706.2,691.0 708.9,692.6 711.7,691.7 714.5,694.8 717.2,693.9 720.0,694.7 722.8,692.1 725.5,694.0 728.3,693.6 731.1,692.5 733.8,690.4 736.6,694.0 739.4,695.1 742.1,692.1 744.9,695.0 747.7,692.7 750.4,694.1 753.2,693.6 756.0,696.7 758.7,692.7 761.5,694.0"/><polyline stroke="#7cc8ec" points="197.0,693.9 199.8,688.6 202.5,689.9 205.3,688.4 208.1,690.5 210.8,692.4 213.6,692.0 216.4,689.1 219.1,691.5 221.9,691.1 224.7,690.9 227.4,693.6 230.2,692.3 233.0,693.2 235.7,694.8 238.5,691.2 241.3,690.7 244.0,691.7 246.8,693.8 249.6,696.0 252.3,692.2 255.1,692.4 257.9,695.5 260.6,693.1 263.4,695.3 266.2,693.0 268.9,692.1 271.7,691.5 274.5,691.6 277.2,691.7 280.0,694.3 282.8,693.4 285.5,693.5 288.3,693.0 291.1,691.9 293.9,690.9 296.6,688.7 299.4,696.0 302.2,692.4 304.9,692.6 307.7,688.4 310.5,689.4 313.2,694.7 316.0,692.0 318.8,693.2 321.5,690.5 324.3,693.8 327.1,692.8 329.8,692.6 332.6,692.5 335.4,693.4 338.1,696.0 340.9,692.3 343.7,690.3 346.4,691.8 349.2,694.1 352.0,692.3 354.7,691.1 357.5,692.3 360.3,692.2 363.0,689.5 365.8,693.7 368.6,693.6 371.3,696.0 374.1,694.5 376.9,694.2 379.6,694.5 382.4,694.1 385.2,689.2 387.9,691.8 390.7,692.3 393.5,688.4 396.2,691.3 399.0,695.3 401.8,692.2 404.5,694.0 407.3,689.5 410.1,693.9 412.8,693.7 415.6,695.7 418.4,692.9 421.1,694.3 423.9,692.8 426.7,693.1 429.4,693.6 432.2,690.7 435.0,690.0 437.7,691.5 440.5,693.8 443.3,694.6 446.0,692.3 448.8,688.4 451.6,692.1 454.3,693.7 457.1,693.9 459.9,694.7 462.6,694.7 465.4,693.2 468.2,689.7 470.9,691.6 473.7,693.0 476.5,695.5 479.2,692.6 482.0,692.3 484.8,694.6 487.6,694.9 490.3,692.9 493.1,690.4 495.9,690.6 498.6,691.4 501.4,692.6 504.2,691.7 506.9,692.1 509.7,688.4 512.5,693.4 515.2,693.2 518.0,690.0 520.8,692.2 523.5,689.5 526.3,691.6 529.1,691.8 531.8,692.8 534.6,695.0 537.4,694.8 540.1,688.6 542.9,690.1 545.7,690.5 548.4,689.9 551.2,690.5 554.0,689.8 556.7,692.1 559.5,692.6 562.3,690.4 565.0,692.4 567.8,694.8 570.6,693.3 573.3,693.5 576.1,691.3 578.9,693.4 581.6,694.5 584.4,693.4 587.2,689.5 589.9,691.6 592.7,691.7 595.5,692.1 598.2,691.6 601.0,690.3 603.8,689.0 606.5,694.6 609.3,690.2 612.1,691.7 614.8,692.7 617.6,688.4 620.4,691.6 623.1,688.4 625.9,689.4 628.7,693.5 631.4,691.6 634.2,690.6 637.0,692.0 639.7,696.0 642.5,693.8 645.3,693.0 648.0,694.5 650.8,689.3 653.6,691.9 656.3,692.9 659.1,692.9 661.9,693.9 664.6,694.1 667.4,692.5 670.2,691.7 673.0,693.0 675.7,692.6 678.5,695.0 681.3,691.9 684.0,693.6 686.8,692.1 689.6,693.9 692.3,693.6 695.1,692.1 697.9,694.5 700.6,688.4 703.4,691.3 706.2,692.1 708.9,693.6 711.7,689.5 714.5,688.9 717.2,690.8 720.0,694.5 722.8,693.7 725.5,691.4 728.3,693.0 731.1,694.7 733.8,695.1 736.6,694.4 739.4,692.7 742.1,693.6 744.9,692.5 747.7,688.4 750.4,688.4 753.2,693.2 756.0,691.8 758.7,691.9 761.5,692.4"/><polyline stroke="#7d74d2" points="197.0,697.2 199.8,700.6 202.5,701.4 205.3,701.8 208.1,701.0 210.8,696.6 213.6,697.1 216.4,703.6 219.1,702.5 221.9,703.3 224.7,698.6 227.4,699.3 230.2,697.4 233.0,699.8 235.7,706.0 238.5,700.4 241.3,699.7 244.0,698.7 246.8,703.9 249.6,701.0 252.3,702.6 255.1,703.0 257.9,700.0 260.6,699.2 263.4,702.8 266.2,706.2 268.9,706.4 271.7,703.6 274.5,697.8 277.2,699.9 280.0,706.4 282.8,704.5 285.5,700.1 288.3,695.2 291.1,695.5 293.9,698.0 296.6,699.2 299.4,703.3 302.2,702.5 304.9,701.9 307.7,703.1 310.5,700.9 313.2,701.7 316.0,699.7 318.8,695.8 321.5,697.0 324.3,698.3 327.1,700.6 329.8,705.0 332.6,701.9 335.4,699.1 338.1,703.1 340.9,697.2 343.7,700.6 346.4,699.3 349.2,701.1 352.0,704.4 354.7,695.1 357.5,702.6 360.3,698.1 363.0,701.5 365.8,699.8 368.6,702.7 371.3,702.2 374.1,698.0 376.9,694.3 379.6,701.4 382.4,700.6 385.2,697.6 387.9,701.6 390.7,698.5 393.5,702.3 396.2,699.0 399.0,698.7 401.8,696.3 404.5,698.2 407.3,703.5 410.1,699.1 412.8,703.4 415.6,698.8 418.4,695.4 421.1,697.3 423.9,701.3 426.7,697.0 429.4,699.0 432.2,703.8 435.0,702.3 437.7,696.5 440.5,700.3 443.3,700.0 446.0,701.3 448.8,705.7 451.6,703.3 454.3,700.0 457.1,699.6 459.9,700.7 462.6,706.4 465.4,698.2 468.2,697.6 470.9,696.6 473.7,695.5 476.5,700.5 479.2,702.2 482.0,699.9 484.8,695.2 487.6,704.2 490.3,702.0 493.1,703.0 495.9,699.3 498.6,695.7 501.4,700.1 504.2,704.1 506.9,701.1 509.7,701.4 512.5,705.3 515.2,698.9 518.0,701.6 520.8,698.6 523.5,703.9 526.3,697.9 529.1,704.1 531.8,698.1 534.6,705.3 537.4,697.4 540.1,700.8 542.9,705.2 545.7,702.3 548.4,699.8 551.2,703.2 554.0,702.6 556.7,700.1 559.5,700.8 562.3,706.4 565.0,703.2 567.8,699.8 570.6,699.3 573.3,697.0 576.1,701.6 578.9,694.3 581.6,696.4 584.4,698.4 587.2,696.6 589.9,696.5 592.7,699.1 595.5,701.9 598.2,697.7 601.0,698.4 603.8,705.6 606.5,705.0 609.3,700.1 612.1,700.0 614.8,699.4 617.6,698.2 620.4,699.4 623.1,695.3 625.9,700.9 628.7,701.7 631.4,699.7 634.2,697.9 637.0,697.4 639.7,695.1 642.5,700.5 645.3,696.9 648.0,698.1 650.8,703.0 653.6,701.4 656.3,694.3 659.1,696.5 661.9,700.8 664.6,706.4 667.4,704.1 670.2,703.4 673.0,700.9 675.7,694.3 678.5,696.6 681.3,698.5 684.0,702.7 686.8,704.6 689.6,702.0 692.3,702.2 695.1,694.3 697.9,700.1 700.6,702.2 703.4,697.4 706.2,699.4 708.9,703.9 711.7,697.3 714.5,700.6 717.2,704.5 720.0,700.4 722.8,698.9 725.5,701.0 728.3,698.4 731.1,697.4 733.8,702.3 736.6,706.4 739.4,706.4 742.1,702.3 744.9,697.1 747.7,696.5 750.4,695.2 753.2,694.3 756.0,698.8 758.7,696.8 761.5,704.1"/><polyline stroke="#a98be0" points="197.0,688.5 199.8,688.9 202.5,690.4 205.3,691.7 208.1,694.0 210.8,691.0 213.6,686.9 216.4,690.7 219.1,689.0 221.9,692.0 224.7,690.2 227.4,693.3 230.2,690.1 233.0,691.0 235.7,689.7 238.5,692.1 241.3,694.3 244.0,692.4 246.8,688.0 249.6,685.3 252.3,690.1 255.1,688.1 257.9,687.7 260.6,688.7 263.4,694.5 266.2,690.6 268.9,693.3 271.7,687.8 274.5,687.6 277.2,688.0 280.0,696.3 282.8,690.2 285.5,688.4 288.3,693.7 291.1,688.5 293.9,689.8 296.6,690.8 299.4,692.6 302.2,694.0 304.9,692.6 307.7,684.7 310.5,688.5 313.2,689.4 316.0,692.1 318.8,692.7 321.5,692.6 324.3,693.6 327.1,688.8 329.8,690.8 332.6,688.1 335.4,693.2 338.1,688.5 340.9,690.1 343.7,688.5 346.4,690.3 349.2,693.0 352.0,687.6 354.7,691.0 357.5,691.1 360.3,693.2 363.0,690.6 365.8,691.6 368.6,690.0 371.3,689.4 374.1,692.2 376.9,695.0 379.6,690.4 382.4,687.8 385.2,687.8 387.9,693.1 390.7,689.4 393.5,689.1 396.2,689.3 399.0,689.0 401.8,691.1 404.5,690.0 407.3,687.7 410.1,691.3 412.8,694.8 415.6,691.9 418.4,690.3 421.1,695.8 423.9,693.8 426.7,689.6 429.4,690.7 432.2,690.3 435.0,694.1 437.7,688.8 440.5,685.0 443.3,689.7 446.0,692.4 448.8,694.3 451.6,688.9 454.3,689.8 457.1,692.6 459.9,687.5 462.6,687.6 465.4,688.0 468.2,694.9 470.9,691.9 473.7,689.1 476.5,693.7 479.2,688.6 482.0,685.9 484.8,686.4 487.6,691.5 490.3,692.8 493.1,688.4 495.9,687.1 498.6,686.1 501.4,686.0 504.2,689.7 506.9,691.5 509.7,696.1 512.5,689.6 515.2,684.7 518.0,690.4 520.8,691.8 523.5,689.0 526.3,689.0 529.1,694.1 531.8,693.4 534.6,694.4 537.4,685.7 540.1,691.4 542.9,688.3 545.7,684.7 548.4,684.7 551.2,685.0 554.0,684.7 556.7,692.6 559.5,692.0 562.3,693.0 565.0,692.0 567.8,684.7 570.6,693.9 573.3,689.7 576.1,693.9 578.9,687.5 581.6,686.0 584.4,690.8 587.2,684.7 589.9,688.8 592.7,686.3 595.5,688.6 598.2,691.6 601.0,691.9 603.8,691.2 606.5,688.9 609.3,689.7 612.1,684.7 614.8,689.6 617.6,691.6 620.4,692.8 623.1,693.3 625.9,695.3 628.7,694.5 631.4,688.9 634.2,689.9 637.0,690.8 639.7,689.6 642.5,687.2 645.3,687.9 648.0,687.6 650.8,691.4 653.6,691.5 656.3,693.0 659.1,691.4 661.9,693.1 664.6,692.2 667.4,691.4 670.2,691.4 673.0,691.5 675.7,692.2 678.5,687.1 681.3,690.6 684.0,693.4 686.8,690.7 689.6,693.7 692.3,694.4 695.1,691.2 697.9,695.5 700.6,696.3 703.4,691.1 706.2,687.7 708.9,694.6 711.7,694.1 714.5,689.7 717.2,696.0 720.0,694.4 722.8,694.9 725.5,692.2 728.3,696.3 731.1,689.4 733.8,690.6 736.6,689.7 739.4,691.2 742.1,696.3 744.9,692.4 747.7,694.8 750.4,691.6 753.2,693.2 756.0,692.1 758.7,691.5 761.5,688.5"/></g><g clip-path="url(#cr)" fill="none" stroke-width="1.3" stroke-linejoin="round"><polyline stroke="#4a90dc" points="197.0,703.1 199.8,701.9 202.5,701.0 205.3,702.2 208.1,703.3 210.8,702.4 213.6,701.6 216.4,700.8 219.1,702.8 221.9,703.4 224.7,701.7 227.4,701.4 230.2,700.4 233.0,700.6 235.7,701.7 238.5,702.2 241.3,700.1 244.0,701.8 246.8,702.7 249.6,703.2 252.3,702.2 255.1,701.9 257.9,702.3 260.6,702.1 263.4,701.7 266.2,701.2 268.9,700.7 271.7,701.5 274.5,703.6 277.2,701.7 280.0,703.3 282.8,702.5 285.5,703.5 288.3,702.3 291.1,702.8 293.9,702.0 296.6,700.1 299.4,701.5 302.2,701.1 304.9,703.0 307.7,702.5 310.5,701.5 313.2,701.9 316.0,701.6 318.8,701.8 321.5,702.9 324.3,701.7 327.1,702.7 329.8,700.3 332.6,702.0 335.4,701.3 338.1,701.8 340.9,701.0 343.7,702.3 346.4,701.1 349.2,701.9 352.0,700.7 354.7,701.1 357.5,701.6 360.3,702.6 363.0,701.4 365.8,701.4 368.6,700.2 371.3,701.9 374.1,701.4 376.9,701.3 379.6,701.5 382.4,701.7 385.2,701.7 387.9,702.5 390.7,703.1 393.5,702.6 396.2,701.6 399.0,700.4 401.8,700.6 404.5,700.6 407.3,700.9 410.1,701.0 412.8,701.6 415.6,701.1 418.4,700.1 421.1,701.8 423.9,702.6 426.7,700.2 429.4,701.3 432.2,700.9 435.0,700.9 437.7,702.8 440.5,700.1 443.3,700.1 446.0,701.3 448.8,701.1 451.6,701.6 454.3,702.7 457.1,702.3 459.9,701.7 462.6,700.8 465.4,701.0 468.2,701.7 470.9,700.6 473.7,702.4 476.5,701.3 479.2,700.7 482.0,701.9 484.8,703.7 487.6,703.3 490.3,702.1 493.1,701.5 495.9,700.4 498.6,702.5 501.4,702.1 504.2,701.4 506.9,702.0 509.7,703.9 512.5,701.7 515.2,700.1 518.0,700.5 520.8,702.5 523.5,702.5 526.3,701.9 529.1,700.1 531.8,700.9 534.6,701.6 537.4,700.4 540.1,701.6 542.9,700.1 545.7,702.2 548.4,702.5 551.2,701.4 554.0,700.5 556.7,701.0 559.5,701.4 562.3,703.6 565.0,703.1 567.8,702.8 570.6,702.7 573.3,701.6 576.1,702.2 578.9,701.3 581.6,701.7 584.4,702.2 587.2,701.9 589.9,701.5 592.7,701.0 595.5,702.2 598.2,702.2 601.0,703.3 603.8,700.8 606.5,700.3 609.3,701.7 612.1,702.4 614.8,703.3 617.6,702.1 620.4,701.8 623.1,700.1 625.9,701.3 628.7,702.5 631.4,703.9 634.2,701.1 637.0,701.6 639.7,703.4 642.5,702.2 645.3,703.6 648.0,700.1 650.8,700.4 653.6,701.0 656.3,701.9 659.1,703.9 661.9,702.6 664.6,703.6 667.4,701.8 670.2,703.9 673.0,703.3 675.7,701.1 678.5,700.2 681.3,702.7 684.0,703.6 686.8,701.5 689.6,701.0 692.3,702.7 695.1,702.8 697.9,702.8 700.6,703.3 703.4,703.0 706.2,701.0 708.9,701.1 711.7,700.1 714.5,701.6 717.2,702.0 720.0,702.9 722.8,702.3 725.5,703.3 728.3,703.9 731.1,701.8 733.8,700.5 736.6,700.8 739.4,700.4 742.1,701.3 744.9,702.5 747.7,702.0 750.4,702.3 753.2,703.1 756.0,703.9 758.7,703.9 761.5,702.4"/><polyline stroke="#f3c22e" points="197.0,692.8 199.8,694.0 202.5,690.6 205.3,692.2 208.1,691.8 210.8,690.5 213.6,694.0 216.4,697.0 219.1,692.6 221.9,694.3 224.7,690.9 227.4,691.9 230.2,690.9 233.0,691.1 235.7,696.6 238.5,692.6 241.3,694.3 244.0,694.9 246.8,694.4 249.6,692.0 252.3,691.1 255.1,690.7 257.9,695.7 260.6,694.9 263.4,697.0 266.2,694.3 268.9,692.3 271.7,694.4 274.5,693.0 277.2,692.6 280.0,691.1 282.8,694.2 285.5,695.0 288.3,695.1 291.1,690.3 293.9,690.3 296.6,692.7 299.4,692.6 302.2,692.8 304.9,692.7 307.7,693.4 310.5,693.8 313.2,695.7 316.0,695.0 318.8,690.4 321.5,691.4 324.3,692.6 327.1,693.4 329.8,693.1 332.6,692.4 335.4,694.2 338.1,693.0 340.9,692.6 343.7,694.4 346.4,695.0 349.2,695.5 352.0,695.8 354.7,692.1 357.5,697.0 360.3,694.6 363.0,694.7 365.8,694.7 368.6,693.3 371.3,691.0 374.1,692.5 376.9,693.2 379.6,694.3 382.4,693.7 385.2,691.5 387.9,693.5 390.7,695.4 393.5,696.1 396.2,696.0 399.0,696.5 401.8,691.9 404.5,692.1 407.3,693.3 410.1,690.4 412.8,693.7 415.6,691.8 418.4,691.3 421.1,695.6 423.9,696.7 426.7,695.8 429.4,692.1 432.2,690.4 435.0,694.8 437.7,691.5 440.5,693.5 443.3,694.0 446.0,694.4 448.8,694.1 451.6,696.9 454.3,696.0 457.1,696.2 459.9,693.0 462.6,689.3 465.4,689.3 468.2,692.8 470.9,696.4 473.7,694.7 476.5,695.3 479.2,689.9 482.0,691.2 484.8,694.1 487.6,691.6 490.3,691.7 493.1,695.9 495.9,694.8 498.6,694.0 501.4,693.3 504.2,692.9 506.9,693.7 509.7,692.9 512.5,694.2 515.2,695.1 518.0,690.7 520.8,691.8 523.5,692.0 526.3,695.9 529.1,694.1 531.8,691.8 534.6,695.3 537.4,691.6 540.1,693.5 542.9,692.4 545.7,693.2 548.4,692.7 551.2,690.7 554.0,693.3 556.7,690.2 559.5,693.9 562.3,695.1 565.0,692.3 567.8,695.0 570.6,694.3 573.3,691.7 576.1,690.4 578.9,695.9 581.6,692.8 584.4,689.4 587.2,689.9 589.9,692.8 592.7,694.2 595.5,694.0 598.2,695.6 601.0,694.2 603.8,693.8 606.5,693.6 609.3,691.0 612.1,693.0 614.8,695.9 617.6,691.8 620.4,694.9 623.1,694.4 625.9,693.7 628.7,693.9 631.4,695.3 634.2,694.1 637.0,689.3 639.7,693.3 642.5,693.4 645.3,691.1 648.0,691.2 650.8,691.2 653.6,691.0 656.3,696.4 659.1,695.6 661.9,693.5 664.6,692.3 667.4,690.4 670.2,691.6 673.0,693.2 675.7,693.1 678.5,693.5 681.3,692.8 684.0,691.7 686.8,693.4 689.6,694.8 692.3,695.2 695.1,691.5 697.9,690.3 700.6,690.5 703.4,690.8 706.2,691.0 708.9,692.6 711.7,691.7 714.5,694.8 717.2,693.9 720.0,694.7 722.8,692.1 725.5,694.0 728.3,693.6 731.1,692.5 733.8,690.4 736.6,694.0 739.4,695.1 742.1,692.1 744.9,695.0 747.7,692.7 750.4,694.1 753.2,693.6 756.0,696.7 758.7,692.7 761.5,694.0"/><polyline stroke="#7cc8ec" points="197.0,693.9 199.8,688.6 202.5,689.9 205.3,688.4 208.1,690.5 210.8,692.4 213.6,692.0 216.4,689.1 219.1,691.5 221.9,691.1 224.7,690.9 227.4,693.6 230.2,692.3 233.0,693.2 235.7,694.8 238.5,691.2 241.3,690.7 244.0,691.7 246.8,693.8 249.6,696.0 252.3,692.2 255.1,692.4 257.9,695.5 260.6,693.1 263.4,695.3 266.2,693.0 268.9,692.1 271.7,691.5 274.5,691.6 277.2,691.7 280.0,694.3 282.8,693.4 285.5,693.5 288.3,693.0 291.1,691.9 293.9,690.9 296.6,688.7 299.4,696.0 302.2,692.4 304.9,692.6 307.7,688.4 310.5,689.4 313.2,694.7 316.0,692.0 318.8,693.2 321.5,690.5 324.3,693.8 327.1,692.8 329.8,692.6 332.6,692.5 335.4,693.4 338.1,696.0 340.9,692.3 343.7,690.3 346.4,691.8 349.2,694.1 352.0,692.3 354.7,691.1 357.5,692.3 360.3,692.2 363.0,689.5 365.8,693.7 368.6,693.6 371.3,696.0 374.1,694.5 376.9,694.2 379.6,694.5 382.4,694.1 385.2,689.2 387.9,691.8 390.7,692.3 393.5,688.4 396.2,691.3 399.0,695.3 401.8,692.2 404.5,694.0 407.3,689.5 410.1,693.9 412.8,693.7 415.6,695.7 418.4,692.9 421.1,694.3 423.9,692.8 426.7,693.1 429.4,693.6 432.2,690.7 435.0,690.0 437.7,691.5 440.5,693.8 443.3,694.6 446.0,692.3 448.8,688.4 451.6,692.1 454.3,693.7 457.1,693.9 459.9,694.7 462.6,694.7 465.4,693.2 468.2,689.7 470.9,691.6 473.7,693.0 476.5,695.5 479.2,692.6 482.0,692.3 484.8,694.6 487.6,694.9 490.3,692.9 493.1,690.4 495.9,690.6 498.6,691.4 501.4,692.6 504.2,691.7 506.9,692.1 509.7,688.4 512.5,693.4 515.2,693.2 518.0,690.0 520.8,692.2 523.5,689.5 526.3,691.6 529.1,691.8 531.8,692.8 534.6,695.0 537.4,694.8 540.1,688.6 542.9,690.1 545.7,690.5 548.4,689.9 551.2,690.5 554.0,689.8 556.7,692.1 559.5,692.6 562.3,690.4 565.0,692.4 567.8,694.8 570.6,693.3 573.3,693.5 576.1,691.3 578.9,693.4 581.6,694.5 584.4,693.4 587.2,689.5 589.9,691.6 592.7,691.7 595.5,692.1 598.2,691.6 601.0,690.3 603.8,689.0 606.5,694.6 609.3,690.2 612.1,691.7 614.8,692.7 617.6,688.4 620.4,691.6 623.1,688.4 625.9,689.4 628.7,693.5 631.4,691.6 634.2,690.6 637.0,692.0 639.7,696.0 642.5,693.8 645.3,693.0 648.0,694.5 650.8,689.3 653.6,691.9 656.3,692.9 659.1,692.9 661.9,693.9 664.6,694.1 667.4,692.5 670.2,691.7 673.0,693.0 675.7,692.6 678.5,695.0 681.3,691.9 684.0,693.6 686.8,692.1 689.6,693.9 692.3,693.6 695.1,692.1 697.9,694.5 700.6,688.4 703.4,691.3 706.2,692.1 708.9,693.6 711.7,689.5 714.5,688.9 717.2,690.8 720.0,694.5 722.8,693.7 725.5,691.4 728.3,693.0 731.1,694.7 733.8,695.1 736.6,694.4 739.4,692.7 742.1,693.6 744.9,692.5 747.7,688.4 750.4,688.4 753.2,693.2 756.0,691.8 758.7,691.9 761.5,692.4"/><polyline stroke="#7d74d2" points="197.0,697.2 199.8,700.6 202.5,701.4 205.3,701.8 208.1,701.0 210.8,696.6 213.6,697.1 216.4,703.6 219.1,702.5 221.9,703.3 224.7,698.6 227.4,699.3 230.2,697.4 233.0,699.8 235.7,706.0 238.5,700.4 241.3,699.7 244.0,698.7 246.8,703.9 249.6,701.0 252.3,702.6 255.1,703.0 257.9,700.0 260.6,699.2 263.4,702.8 266.2,706.2 268.9,706.4 271.7,703.6 274.5,697.8 277.2,699.9 280.0,706.4 282.8,704.5 285.5,700.1 288.3,695.2 291.1,695.5 293.9,698.0 296.6,699.2 299.4,703.3 302.2,702.5 304.9,701.9 307.7,703.1 310.5,700.9 313.2,701.7 316.0,699.7 318.8,695.8 321.5,697.0 324.3,698.3 327.1,700.6 329.8,705.0 332.6,701.9 335.4,699.1 338.1,703.1 340.9,697.2 343.7,700.6 346.4,699.3 349.2,701.1 352.0,704.4 354.7,695.1 357.5,702.6 360.3,698.1 363.0,701.5 365.8,699.8 368.6,702.7 371.3,702.2 374.1,698.0 376.9,694.3 379.6,701.4 382.4,700.6 385.2,697.6 387.9,701.6 390.7,698.5 393.5,702.3 396.2,699.0 399.0,698.7 401.8,696.3 404.5,698.2 407.3,703.5 410.1,699.1 412.8,703.4 415.6,698.8 418.4,695.4 421.1,697.3 423.9,701.3 426.7,697.0 429.4,699.0 432.2,703.8 435.0,702.3 437.7,696.5 440.5,700.3 443.3,700.0 446.0,701.3 448.8,705.7 451.6,703.3 454.3,700.0 457.1,699.6 459.9,700.7 462.6,706.4 465.4,698.2 468.2,697.6 470.9,696.6 473.7,695.5 476.5,700.5 479.2,702.2 482.0,699.9 484.8,695.2 487.6,704.2 490.3,702.0 493.1,703.0 495.9,699.3 498.6,695.7 501.4,700.1 504.2,704.1 506.9,701.1 509.7,701.4 512.5,705.3 515.2,698.9 518.0,701.6 520.8,698.6 523.5,703.9 526.3,697.9 529.1,704.1 531.8,698.1 534.6,705.3 537.4,697.4 540.1,700.8 542.9,705.2 545.7,702.3 548.4,699.8 551.2,703.2 554.0,702.6 556.7,700.1 559.5,700.8 562.3,706.4 565.0,703.2 567.8,699.8 570.6,699.3 573.3,697.0 576.1,701.6 578.9,694.3 581.6,696.4 584.4,698.4 587.2,696.6 589.9,696.5 592.7,699.1 595.5,701.9 598.2,697.7 601.0,698.4 603.8,705.6 606.5,705.0 609.3,700.1 612.1,700.0 614.8,699.4 617.6,698.2 620.4,699.4 623.1,695.3 625.9,700.9 628.7,701.7 631.4,699.7 634.2,697.9 637.0,697.4 639.7,695.1 642.5,700.5 645.3,696.9 648.0,698.1 650.8,703.0 653.6,701.4 656.3,694.3 659.1,696.5 661.9,700.8 664.6,706.4 667.4,704.1 670.2,703.4 673.0,700.9 675.7,694.3 678.5,696.6 681.3,698.5 684.0,702.7 686.8,704.6 689.6,702.0 692.3,702.2 695.1,694.3 697.9,700.1 700.6,702.2 703.4,697.4 706.2,699.4 708.9,703.9 711.7,697.3 714.5,700.6 717.2,704.5 720.0,700.4 722.8,698.9 725.5,701.0 728.3,698.4 731.1,697.4 733.8,702.3 736.6,706.4 739.4,706.4 742.1,702.3 744.9,697.1 747.7,696.5 750.4,695.2 753.2,694.3 756.0,698.8 758.7,696.8 761.5,704.1"/><polyline stroke="#a98be0" points="197.0,688.5 199.8,688.9 202.5,690.4 205.3,691.7 208.1,694.0 210.8,691.0 213.6,686.9 216.4,690.7 219.1,689.0 221.9,692.0 224.7,690.2 227.4,693.3 230.2,690.1 233.0,691.0 235.7,689.7 238.5,692.1 241.3,694.3 244.0,692.4 246.8,688.0 249.6,685.3 252.3,690.1 255.1,688.1 257.9,687.7 260.6,688.7 263.4,694.5 266.2,690.6 268.9,693.3 271.7,687.8 274.5,687.6 277.2,688.0 280.0,696.3 282.8,690.2 285.5,688.4 288.3,693.7 291.1,688.5 293.9,689.8 296.6,690.8 299.4,692.6 302.2,694.0 304.9,692.6 307.7,684.7 310.5,688.5 313.2,689.4 316.0,692.1 318.8,692.7 321.5,692.6 324.3,693.6 327.1,688.8 329.8,690.8 332.6,688.1 335.4,693.2 338.1,688.5 340.9,690.1 343.7,688.5 346.4,690.3 349.2,693.0 352.0,687.6 354.7,691.0 357.5,691.1 360.3,693.2 363.0,690.6 365.8,691.6 368.6,690.0 371.3,689.4 374.1,692.2 376.9,695.0 379.6,690.4 382.4,687.8 385.2,687.8 387.9,693.1 390.7,689.4 393.5,689.1 396.2,689.3 399.0,689.0 401.8,691.1 404.5,690.0 407.3,687.7 410.1,691.3 412.8,694.8 415.6,691.9 418.4,690.3 421.1,695.8 423.9,693.8 426.7,689.6 429.4,690.7 432.2,690.3 435.0,694.1 437.7,688.8 440.5,685.0 443.3,689.7 446.0,692.4 448.8,694.3 451.6,688.9 454.3,689.8 457.1,692.6 459.9,687.5 462.6,687.6 465.4,688.0 468.2,694.9 470.9,691.9 473.7,689.1 476.5,693.7 479.2,688.6 482.0,685.9 484.8,686.4 487.6,691.5 490.3,692.8 493.1,688.4 495.9,687.1 498.6,686.1 501.4,686.0 504.2,689.7 506.9,691.5 509.7,696.1 512.5,689.6 515.2,684.7 518.0,690.4 520.8,691.8 523.5,689.0 526.3,689.0 529.1,694.1 531.8,693.4 534.6,694.4 537.4,685.7 540.1,691.4 542.9,688.3 545.7,684.7 548.4,684.7 551.2,685.0 554.0,684.7 556.7,692.6 559.5,692.0 562.3,693.0 565.0,692.0 567.8,684.7 570.6,693.9 573.3,689.7 576.1,693.9 578.9,687.5 581.6,686.0 584.4,690.8 587.2,684.7 589.9,688.8 592.7,686.3 595.5,688.6 598.2,691.6 601.0,691.9 603.8,691.2 606.5,688.9 609.3,689.7 612.1,684.7 614.8,689.6 617.6,691.6 620.4,692.8 623.1,693.3 625.9,695.3 628.7,694.5 631.4,688.9 634.2,689.9 637.0,690.8 639.7,689.6 642.5,687.2 645.3,687.9 648.0,687.6 650.8,691.4 653.6,691.5 656.3,693.0 659.1,691.4 661.9,693.1 664.6,692.2 667.4,691.4 670.2,691.4 673.0,691.5 675.7,692.2 678.5,687.1 681.3,690.6 684.0,693.4 686.8,690.7 689.6,693.7 692.3,694.4 695.1,691.2 697.9,695.5 700.6,696.3 703.4,691.1 706.2,687.7 708.9,694.6 711.7,694.1 714.5,689.7 717.2,696.0 720.0,694.4 722.8,694.9 725.5,692.2 728.3,696.3 731.1,689.4 733.8,690.6 736.6,689.7 739.4,691.2 742.1,696.3 744.9,692.4 747.7,694.8 750.4,691.6 753.2,693.2 756.0,692.1 758.7,691.5 761.5,688.5"/></g></svg>
<div class="a" style="left:760.4px;top:672px;width:1px;height:67px;background:#8a8a8c"></div>
<div class="a" style="left:622px;top:435.9px;width:141.4px;height:320px;border:1px solid #222;border-bottom:none"></div>
<div class="a" style="left:622px;top:754.1px;width:142.4px;height:23.5px;background:#333036;border-radius:0 0 2.5px 2.5px"></div>
<div class="t" style="top:760px;font-size:8.6px;line-height:10px;color:#fff;font-weight:bold;left:594.30px;width:200px;text-align:center;">1h</div>
<svg class="a" style="left:676.2px;top:760.8px;" width="6" height="10" viewBox="0 0 6 10"><rect x="0" y="0" width="1.6" height="1.6" fill="#6b6870"/><rect x="0" y="3.6" width="1.6" height="1.6" fill="#6b6870"/><rect x="0" y="7.2" width="1.6" height="1.6" fill="#6b6870"/><rect x="3.6" y="0" width="1.6" height="1.6" fill="#6b6870"/><rect x="3.6" y="3.6" width="1.6" height="1.6" fill="#6b6870"/><rect x="3.6" y="7.2" width="1.6" height="1.6" fill="#6b6870"/></svg>
<svg class="a" style="left:707px;top:760.8px;" width="6" height="10" viewBox="0 0 6 10"><rect x="0" y="0" width="1.6" height="1.6" fill="#6b6870"/><rect x="0" y="3.6" width="1.6" height="1.6" fill="#6b6870"/><rect x="0" y="7.2" width="1.6" height="1.6" fill="#6b6870"/><rect x="3.6" y="0" width="1.6" height="1.6" fill="#6b6870"/><rect x="3.6" y="3.6" width="1.6" height="1.6" fill="#6b6870"/><rect x="3.6" y="7.2" width="1.6" height="1.6" fill="#6b6870"/></svg>
<div class="a" style="left:845.4px;top:64px;width:1.6px;height:723px;background:#f0f0f1"></div>
</div>
</body>
</html>
